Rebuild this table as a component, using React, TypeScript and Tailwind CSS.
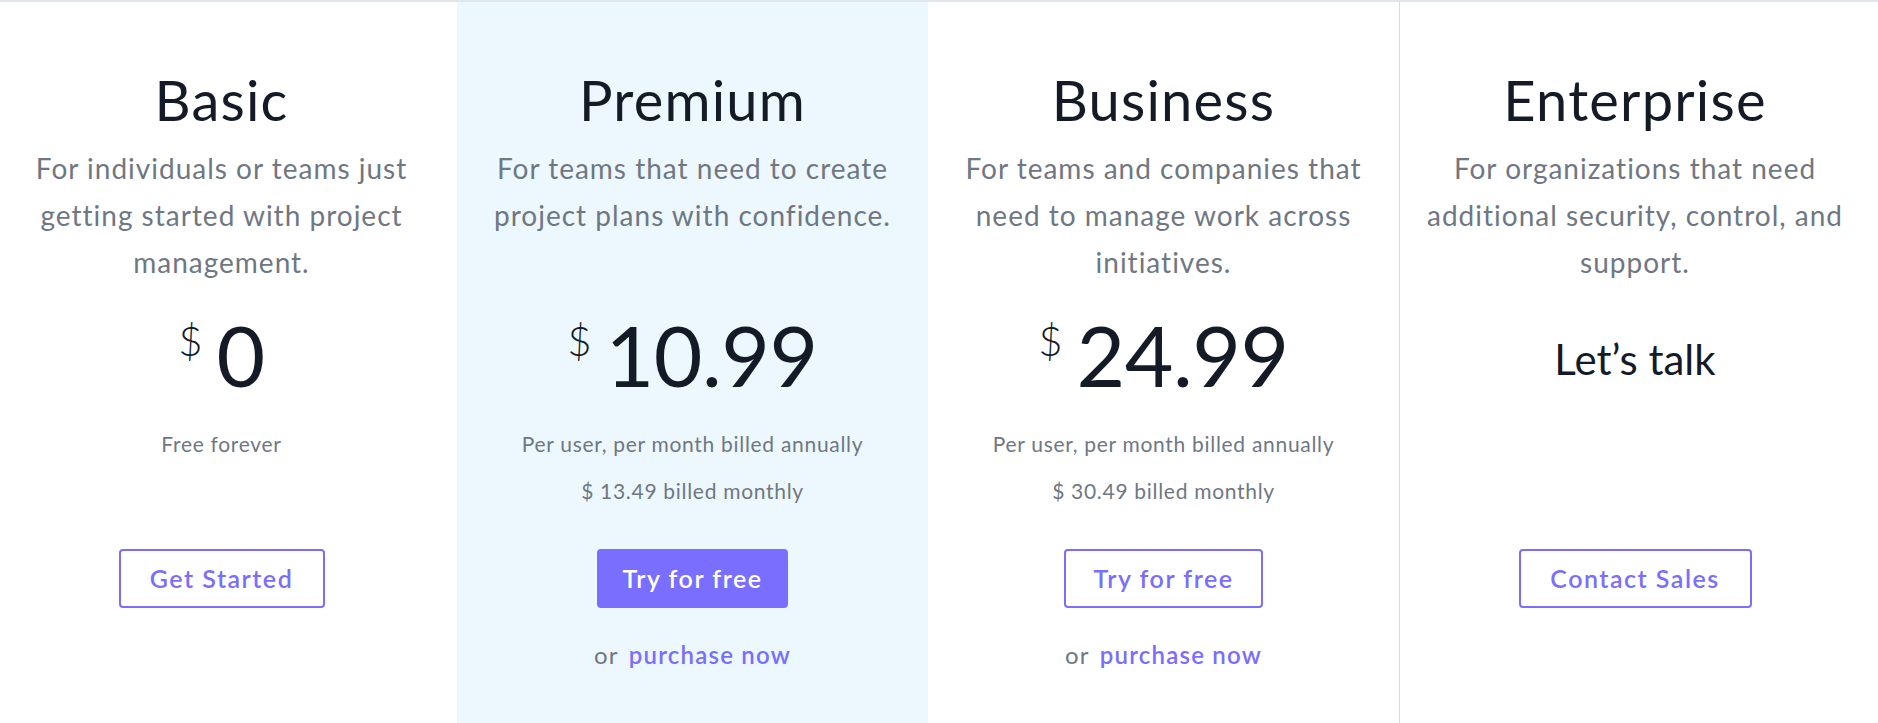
import React from 'react';

interface Plan {
  name: string;
  lines: string[];
  price?: string;
  notes: string[];
  cta: string;
  ctaWidth: string;
  primary?: boolean;
  purchase?: boolean;
  highlight?: boolean;
}

const plans: Plan[] = [
  {
    name: 'Basic',
    lines: ['For individuals or teams just', 'getting started with project', 'management.'],
    price: '0',
    notes: ['Free forever'],
    cta: 'Get Started',
    ctaWidth: 'w-[206px]',
  },
  {
    name: 'Premium',
    lines: ['For teams that need to create', 'project plans with confidence.'],
    price: '10.99',
    notes: ['Per user, per month billed annually', '$ 13.49 billed monthly'],
    cta: 'Try for free',
    ctaWidth: 'w-[191px]',
    primary: true,
    purchase: true,
    highlight: true,
  },
  {
    name: 'Business',
    lines: ['For teams and companies that', 'need to manage work across', 'initiatives.'],
    price: '24.99',
    notes: ['Per user, per month billed annually', '$ 30.49 billed monthly'],
    cta: 'Try for free',
    ctaWidth: 'w-[199px]',
    purchase: true,
  },
  {
    name: 'Enterprise',
    lines: ['For organizations that need', 'additional security, control, and', 'support.'],
    notes: [],
    cta: 'Contact Sales',
    ctaWidth: 'w-[233px]',
  },
];

const PlanColumn: React.FC<{ plan: Plan; last?: boolean }> = ({ plan, last }) => {
  return (
    <div
      className={`w-[471px] shrink-0 flex flex-col items-center text-center pt-[66px] ${
        plan.highlight ? 'bg-[#edf8fe]' : ''
      } ${last ? 'border-l border-[#d3dae1]' : ''}`}
    >
      <h2 className="text-[56px] leading-[64px] font-normal tracking-[1.2px] text-[#151b26]">{plan.name}</h2>

      <div className="mt-[13px] h-[141px] text-[28px] leading-[47px] tracking-[1px] text-[#6f7782]">
        {plan.lines.map((line) => (
          <div key={line} className="whitespace-nowrap">
            {line}
          </div>
        ))}
      </div>

      <div className="mt-[27px] h-[84px]">
        {plan.price ? (
          <div className="flex items-start text-[#151b26]">
            <span className="text-[42px] leading-[42px] mt-[6px] mr-[14px] font-light">$</span>
            <span className="text-[84px] leading-[84px] font-normal tracking-[-0.5px]">{plan.price}</span>
          </div>
        ) : (
          <div className="pt-[25px] text-[42px] leading-[42px] text-[#151b26]">Let’s talk</div>
        )}
      </div>

      <div className="mt-[23px] h-[94px] text-[21px] leading-[47px] tracking-[0.7px] text-[#6f7782]">
        {plan.notes.map((note) => (
          <div key={note} className="whitespace-nowrap">
            {note}
          </div>
        ))}
      </div>

      <button
        className={`mt-[35px] h-[59px] ${plan.ctaWidth} rounded-[4px] border-2 border-[#796eff] text-[25px] font-semibold tracking-[1.5px] ${
          plan.primary ? 'bg-[#796eff] text-white' : 'bg-white text-[#796eff]'
        }`}
      >
        {plan.cta}
      </button>

      {plan.purchase && (
        <div className="mt-[32px] text-[24px] leading-[30px] tracking-[1.2px] whitespace-nowrap">
          <span className="text-[#6f7782]">or</span>
          <a href="#" className="ml-[10px] font-semibold text-[#796eff]">
            purchase now
          </a>
        </div>
      )}
    </div>
  );
};

export default function App() {
  return (
    <div
      className="w-full h-[723px] overflow-hidden bg-white border-t-2 border-[#e1e6ec]"
      style={{ fontFamily: 'Lato, "Open Sans", sans-serif' }}
    >
      <div className="flex h-full ml-[-14px]">
        {plans.map((plan, i) => (
          <PlanColumn key={plan.name} plan={plan} last={i === plans.length - 1} />
        ))}
      </div>
    </div>
  );
}
